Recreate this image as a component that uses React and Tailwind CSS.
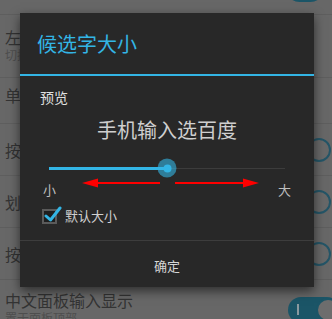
import React from "react";

const font = "font-['Noto_Sans_CJK_SC','Noto_Sans',sans-serif]";

function Toggle({ on }) {
  // 背景里的开关（被遮罩压暗）
  if (on) {
    return (
      <div className="relative w-[52px] h-[26px] rounded-full bg-[#1b5567] flex items-center justify-end">
        <span className="absolute left-[9px] top-[7px] w-[2px] h-[11px] bg-[#8a9aa0]" />
        <span className="w-[24px] h-[24px] rounded-full bg-[#6d6d6d] border-2 border-[#1b5567]" />
      </div>
    );
  }
  return (
    <div className="w-[52px] h-[26px] flex items-center justify-end">
      <span className="w-[24px] h-[24px] rounded-full bg-[#686868] border-2 border-[#245567]" />
    </div>
  );
}

export default function App() {
  return (
    <div className={`relative w-[332px] h-[319px] overflow-hidden bg-[#676767] ${font}`}>
      {/* 背景设置列表 */}
      <div className="flex flex-col -mt-[40px]">
        <div className="h-[55px] flex items-start justify-end pr-[8px] pt-[15px] border-b border-[#5e5e5e]">
          <div className="w-[38px] h-[27px] rounded-full bg-[#1b5567]" />
        </div>
        <div className="h-[63px] flex flex-col justify-center pb-[3px] pl-[5px] border-b border-[#5e5e5e]">
          <span className="text-[16px] leading-[20px] text-[#333]">左右滑动切换</span>
          <span className="text-[12px] leading-[16px] text-[#4e4e4e]">切换输入方式</span>
        </div>
        <div className="h-[46px] flex items-start pt-[7px] pl-[5px] border-b border-[#5e5e5e]">
          <span className="text-[16px] leading-[20px] text-[#333]">单手模式</span>
        </div>
        <div className="h-[52px] flex items-center justify-between pl-[5px] pr-[1px] border-b border-[#5e5e5e]">
          <span className="text-[16px] leading-[20px] text-[#333]">按键音</span>
          <Toggle />
        </div>
        <div className="h-[52px] flex items-center justify-between pl-[5px] pr-[1px] border-b border-[#5e5e5e]">
          <span className="text-[16px] leading-[20px] text-[#333]">划词搜索</span>
          <Toggle />
        </div>
        <div className="h-[52px] flex items-center justify-between pl-[5px] pr-[1px] border-b border-[#5e5e5e]">
          <span className="text-[16px] leading-[20px] text-[#333]">按键震动</span>
          <Toggle />
        </div>
        <div className="h-[52px] flex items-start justify-between pl-[5px] pr-0 pt-[10px]">
          <div className="flex flex-col">
            <span className="text-[16px] leading-[20px] text-[#333]">中文面板输入显示</span>
            <span className="text-[12px] leading-[16px] text-[#4e4e4e]">置于面板顶部</span>
          </div>
          <div className="mt-[7px] -mr-[8px]">
            <Toggle on />
          </div>
        </div>
      </div>

      {/* 对话框 */}
      <div className="absolute left-[20px] top-[13px] w-[294px] h-[274px] bg-[#282828] flex flex-col shadow-[0_4px_10px_rgba(0,0,0,0.55)]">
        <div className="h-[61px] flex items-center pl-[17px]">
          <span className="text-[20px] leading-[28px] text-[#33b5e5]">候选字大小</span>
        </div>
        <div className="h-[2px] bg-[#33b5e5]" />

        <div className="pt-[11px] pl-[20px] text-[14px] leading-[20px] text-[#e0e0e0]">预览</div>

        <div className="mt-[9px] text-center text-[20px] leading-[28px] text-[#cfcfcf]">手机输入选百度</div>

        <div className="mt-[14px] h-[20px] relative mx-[29px] flex items-center">
          <div className="h-[3px] w-[50%] bg-[#33b5e5]" />
          <div className="h-[1px] flex-1 bg-[#3c3c3c]" />
          <div className="absolute left-[50%] top-1/2 -translate-x-1/2 -translate-y-1/2 w-[19px] h-[19px] rounded-full bg-[#33b5e5]/60 flex items-center justify-center">
            <span className="w-[8px] h-[8px] rounded-full bg-[#33b5e5]" />
          </div>
        </div>

        <div className="relative mt-[4px] h-[16px] flex items-center justify-between px-[23px] text-[13px] leading-[16px] text-[#bdbdbd]">
          <span>小</span>
          <span>大</span>
          <svg className="absolute left-0 -top-[7px]" width="294" height="16" viewBox="0 0 294 16">
            <line x1="140" y1="8" x2="72" y2="8" stroke="#ff0000" strokeWidth="2" />
            <polygon points="62,8 78,3.5 78,12.5" fill="#ff0000" />
            <line x1="155" y1="8" x2="228" y2="8" stroke="#ff0000" strokeWidth="2" />
            <polygon points="239,8 223,3.5 223,12.5" fill="#ff0000" />
          </svg>
        </div>

        <div className="mt-[8px] h-[20px] flex items-center pl-[22px] gap-[8px]">
          <div className="relative w-[15px] h-[15px] border-2 border-[#5a5a5a] bg-[#1e1e1e]">
            <svg className="absolute -left-[1px] -top-[6px]" width="19" height="19" viewBox="0 0 19 19">
              <path d="M3 11 L7.5 15 L17 3" fill="none" stroke="#33b5e5" strokeWidth="3" strokeLinecap="round" strokeLinejoin="round" />
            </svg>
          </div>
          <span className="text-[13px] leading-[16px] text-[#d0d0d0]">默认大小</span>
        </div>

        <div className="mt-[14px] h-[1px] bg-[#3d3d3d]" />
        <div className="flex-1 flex items-center justify-center pt-[4px] text-[13px] text-[#d6d6d6]">确定</div>
      </div>
    </div>
  );
}
